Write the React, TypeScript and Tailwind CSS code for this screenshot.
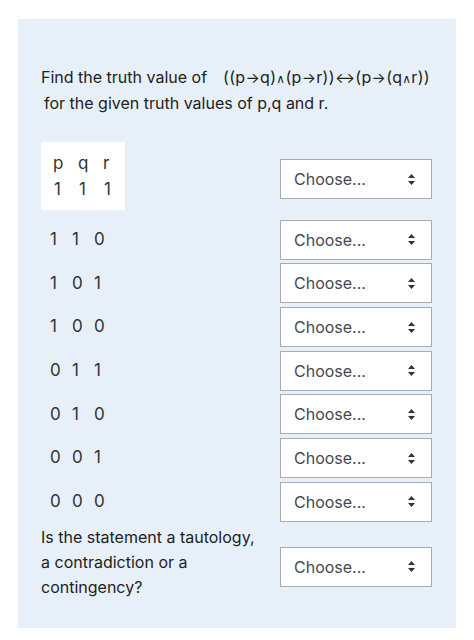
import { ReactNode } from "react";

const font = { fontFamily: '"Inter", "Liberation Sans", "DejaVu Sans", sans-serif' };

function Spinner() {
  return (
    <svg width="9" height="13" viewBox="0 0 9 13" className="shrink-0">
      <path d="M4.5 1 L8 5 L1 5 Z" fill="#333" />
      <path d="M4.5 12 L8 8 L1 8 Z" fill="#333" />
    </svg>
  );
}

function Choose() {
  return (
    <div className="w-[152px] h-10 bg-white border border-[#a8acb0] flex items-center justify-between pl-[13px] pr-[15px]">
      <span className="text-[16px] text-[#45494e]">Choose...</span>
      <Spinner />
    </div>
  );
}

function Digits({ vals }: { vals: string[] }) {
  return (
    <div className="flex text-[17px] text-[#333] pl-[9px]">
      {vals.map((v, i) => (
        <span key={i} className="w-[22px]">
          {v}
        </span>
      ))}
    </div>
  );
}

function Row({ left, children }: { left: ReactNode; children?: ReactNode }) {
  return (
    <div className="flex items-center">
      <div className="w-[239px] shrink-0">{left}</div>
      {children ?? <Choose />}
    </div>
  );
}

const rows = [
  ["1", "1", "0"],
  ["1", "0", "1"],
  ["1", "0", "0"],
  ["0", "1", "1"],
  ["0", "1", "0"],
  ["0", "0", "1"],
  ["0", "0", "0"],
];

export default function App() {
  return (
    <div className="w-[474px] h-[640px] bg-white pt-[19px] pl-[18px]" style={font}>
      <div className="w-[438px] h-[609px] bg-[#e7f0f8] pl-[23px] pt-[46px]">
        <div className="text-[16px] leading-[25px] text-[#222]">
          <div className="flex">
            <span>Find the truth value of</span>
            <span className="ml-[16px] tracking-[0.3px]">
              ((p<span className="text-[15px]">→</span>q)<span className="text-[12px]">∧</span>(p
              <span className="text-[15px]">→</span>r))<span className="text-[15px]">↔</span>(p
              <span className="text-[15px]">→</span>(q<span className="text-[12px]">∧</span>r))
            </span>
          </div>
          <div className="pl-[3px]">for the given truth values of p,q and r.</div>
        </div>

        <div className="mt-[26px] flex flex-col gap-[3.7px]">
          <div className="flex items-center mb-[6px]">
            <div className="w-[239px] shrink-0">
              <div className="w-[84px] h-[68px] bg-white flex flex-col justify-center text-[17px] text-[#333] leading-[26px]">
                <div className="flex pl-[12px]">
                  <span className="w-[25px]">p</span>
                  <span className="w-[25px]">q</span>
                  <span>r</span>
                </div>
                <div className="flex pl-[13px]">
                  <span className="w-[25px]">1</span>
                  <span className="w-[25px]">1</span>
                  <span>1</span>
                </div>
              </div>
            </div>
            <div className="mt-[6px]">
              <Choose />
            </div>
          </div>
          {rows.map((r, i) => (
            <Row key={i} left={<Digits vals={r} />} />
          ))}
          <div className="flex items-center mt-[-1px]">
            <div className="w-[239px] shrink-0 text-[16px] leading-[25px] text-[#222]">
              <div>Is the statement a tautology,</div>
              <div>a contradiction or a</div>
              <div>contingency?</div>
            </div>
            <div className="mt-[9px]">
              <Choose />
            </div>
          </div>
        </div>
      </div>
    </div>
  );
}
